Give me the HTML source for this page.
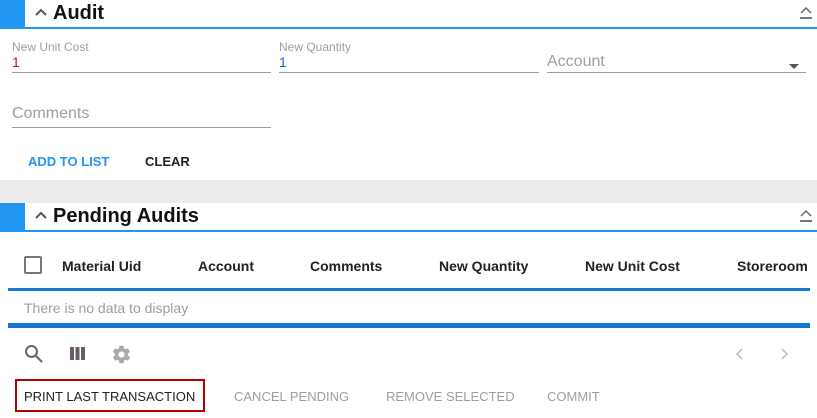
<!DOCTYPE html>
<html><head><meta charset="utf-8"><style>
*{margin:0;padding:0;box-sizing:border-box}
body{width:817px;height:418px;background:#fff;font-family:"Liberation Sans",Arial,sans-serif;position:relative;overflow:hidden}
.a{position:absolute;white-space:nowrap}
.blk{position:absolute;left:0;width:25px;background:#2196f3}
.ln{position:absolute;background:#2196f3}
.t{font-size:20px;font-weight:bold;color:#111}
.lab{font-size:12px;color:#9e9e9e}
.ul{position:absolute;height:1px;background:#9e9e9e}
.th{font-size:14px;font-weight:bold;color:#222}
.btn{font-size:13px;color:#9e9e9e}
</style></head><body>
<div class="blk" style="top:0;height:29px"></div>
<div class="ln" style="left:25px;top:27px;width:792px;height:2px"></div>
<svg class="a" style="left:35px;top:8px" width="12" height="8"><path d="M1 7 L6 2 L11 7" fill="none" stroke="#555" stroke-width="2"/></svg>
<div class="a t" style="left:53px;top:2px">Audit</div>
<svg class="a" style="left:799px;top:6px" width="14" height="14"><path d="M2 7 L7 2 L12 7" fill="none" stroke="#666" stroke-width="1.5"/><rect x="1" y="11" width="12" height="2" fill="#777"/></svg>

<div class="a lab" style="left:12px;top:40px">New Unit Cost</div>
<div class="a" style="left:12px;top:54px;font-size:14px;color:#b71c1c">1</div>
<div class="ul" style="left:12px;top:72px;width:259px"></div>
<div class="a lab" style="left:279px;top:40px">New Quantity</div>
<div class="a" style="left:279px;top:54px;font-size:14px;color:#1565c0">1</div>
<div class="ul" style="left:279px;top:72px;width:260px"></div>
<div class="a" style="left:547px;top:53px;font-size:16px;color:#9e9e9e">Account</div>
<div class="a" style="left:789px;top:64px;width:0;height:0;border-left:5px solid transparent;border-right:5px solid transparent;border-top:5px solid #555"></div>
<div class="ul" style="left:547px;top:72px;width:259px"></div>
<div class="a" style="left:12px;top:105px;font-size:16px;color:#9e9e9e">Comments</div>
<div class="ul" style="left:12px;top:127px;width:259px"></div>
<div class="a" style="left:28px;top:154px;font-size:13px;font-weight:bold;color:#2196f3">ADD TO LIST</div>
<div class="a" style="left:145px;top:154px;font-size:13px;font-weight:bold;color:#222">CLEAR</div>

<div class="a" style="left:0;top:180px;width:817px;height:23px;background:#ececec"></div>
<div class="blk" style="top:203px;height:29px"></div>
<div class="ln" style="left:25px;top:230px;width:792px;height:2px"></div>
<svg class="a" style="left:35px;top:211px" width="12" height="8"><path d="M1 7 L6 2 L11 7" fill="none" stroke="#555" stroke-width="2"/></svg>
<div class="a t" style="left:53px;top:205px">Pending Audits</div>
<svg class="a" style="left:799px;top:209px" width="14" height="14"><path d="M2 7 L7 2 L12 7" fill="none" stroke="#666" stroke-width="1.5"/><rect x="1" y="11" width="12" height="2" fill="#777"/></svg>

<div class="a" style="left:24px;top:256px;width:18px;height:18px;border:2px solid #777;border-radius:2px"></div>
<div class="a th" style="left:62px;top:258px">Material Uid</div>
<div class="a th" style="left:198px;top:258px">Account</div>
<div class="a th" style="left:310px;top:258px">Comments</div>
<div class="a th" style="left:439px;top:258px">New Quantity</div>
<div class="a th" style="left:585px;top:258px">New Unit Cost</div>
<div class="a th" style="left:737px;top:258px">Storeroom</div>
<div class="a" style="left:8px;top:288px;width:802px;height:3px;background:#1976d2"></div>
<div class="a" style="left:24px;top:300px;font-size:14px;color:#9e9e9e">There is no data to display</div>
<div class="a" style="left:8px;top:323px;width:802px;height:5px;background:#1976d2"></div>

<svg class="a" style="left:24px;top:344px" width="20" height="20" viewBox="0 0 20 20"><circle cx="7.5" cy="7.5" r="5.5" fill="none" stroke="#666" stroke-width="2"/><line x1="11.5" y1="11.5" x2="18" y2="18" stroke="#666" stroke-width="2"/></svg>
<svg class="a" style="left:70px;top:347px" width="18" height="14"><rect x="0" y="0" width="4" height="13" fill="#6a5a6a"/><rect x="5.5" y="0" width="4" height="13" fill="#6a5a6a"/><rect x="11" y="0" width="4" height="13" fill="#6a5a6a"/></svg>
<svg class="a" style="left:111px;top:344px" width="21" height="21" viewBox="0 0 24 24"><path fill="#aaa" d="M19.4 13c.04-.33.06-.66.06-1s-.02-.67-.06-1l2.1-1.65c.2-.15.25-.42.12-.64l-2-3.46c-.12-.22-.39-.3-.61-.22l-2.49 1c-.52-.4-1.08-.73-1.69-.98l-.38-2.65C14.46 2.18 14.25 2 14 2h-4c-.25 0-.46.18-.49.42l-.38 2.65c-.61.25-1.17.59-1.69.98l-2.49-1c-.23-.09-.49 0-.61.22l-2 3.46c-.13.22-.07.49.12.64L4.57 11c-.04.33-.07.67-.07 1s.03.67.07 1l-2.11 1.65c-.19.15-.24.42-.12.64l2 3.46c.12.22.39.3.61.22l2.49-1c.52.4 1.08.73 1.69.98l.38 2.65c.03.24.24.42.49.42h4c.25 0 .46-.18.49-.42l.38-2.65c.61-.25 1.17-.59 1.69-.98l2.49 1c.23.09.49 0 .61-.22l2-3.46c.12-.22.07-.49-.12-.64L19.4 13zM12 15.5c-1.93 0-3.5-1.57-3.5-3.5s1.57-3.5 3.5-3.5 3.5 1.57 3.5 3.5-1.57 3.5-3.5 3.5z"/></svg>
<svg class="a" style="left:735px;top:347px" width="10" height="14"><path d="M7 2 L2 7 L7 12" fill="none" stroke="#bbb" stroke-width="1.5"/></svg>
<svg class="a" style="left:779px;top:347px" width="10" height="14"><path d="M3 2 L8 7 L3 12" fill="none" stroke="#bbb" stroke-width="1.5"/></svg>

<div class="a" style="left:15px;top:379px;width:190px;height:33px;border:2px solid #b00000"></div>
<div class="a" style="left:24px;top:389px;font-size:13px;color:#222">PRINT LAST TRANSACTION</div>
<div class="a btn" style="left:234px;top:389px">CANCEL PENDING</div>
<div class="a btn" style="left:386px;top:389px">REMOVE SELECTED</div>
<div class="a btn" style="left:547px;top:389px">COMMIT</div>
</body></html>
